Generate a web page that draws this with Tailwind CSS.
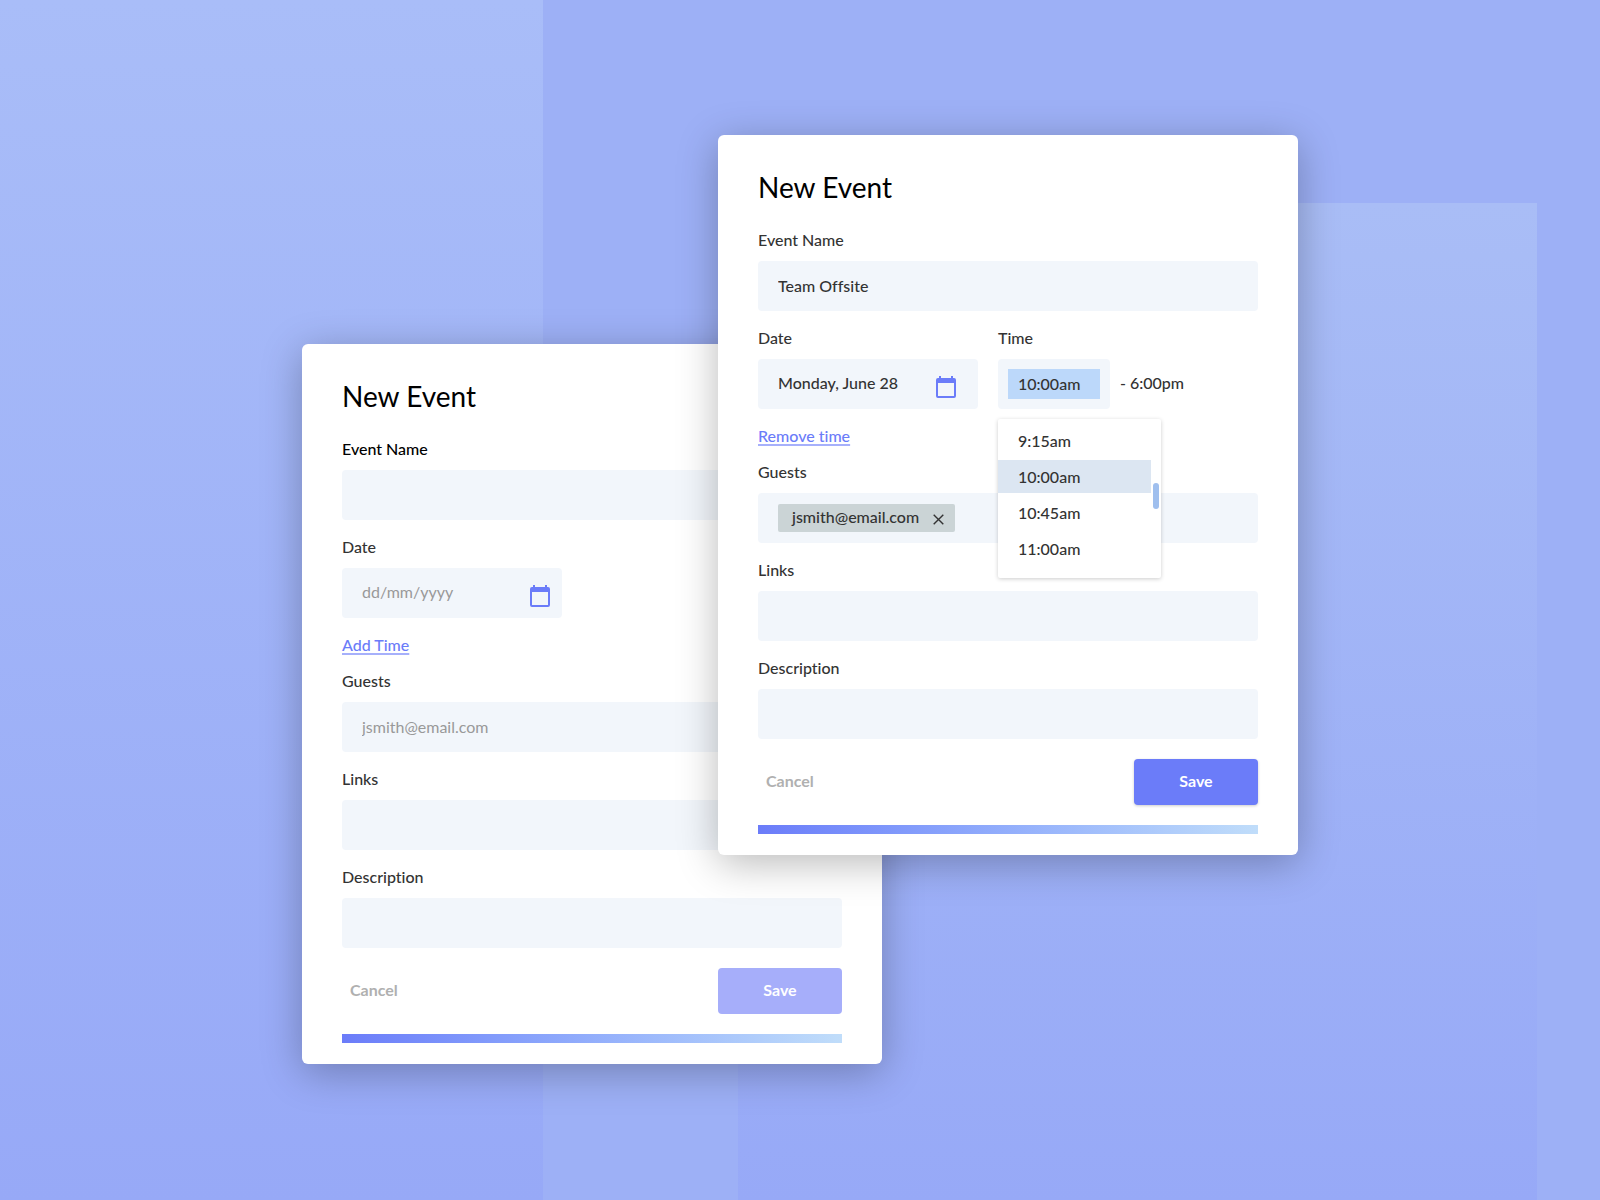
<!DOCTYPE html>
<html lang="en">
<head>
    <meta charset="UTF-8">
    <meta name="viewport" content="width=device-width, initial-scale=1.0">
    <title>New Event</title>
    <script src="https://cdn.jsdelivr.net/npm/@tailwindcss/browser@4"></script>
</head>
<body class="bg-[#9db0f6] font-['Lato',sans-serif] text-base leading-5 text-[#333333] [font-variant-ligatures:none]">
    <div class="relative isolate min-h-screen overflow-hidden">
        <!-- Background panels -->
        <div class="absolute inset-y-0 left-0 -z-10 w-[543px] bg-linear-to-b from-[#a9bdf8] to-[#97a9f7]"></div>
        <div class="absolute top-[203px] right-[63px] bottom-0 left-[738px] -z-10 bg-linear-to-b from-[#a9bdf6] to-[#97a9f7]"></div>

        <main class="flex items-start justify-center pt-[135px] pb-34">
            <!-- Empty form -->
            <form class="mt-[209px] w-[580px] shrink-0 rounded-md bg-white px-10 pt-[34px] pb-[21px] shadow-[0_8px_40px_rgba(0,0,0,0.28)]">
                <h1 class="mb-[25px] text-[28px] leading-9 text-black">New Event</h1>

                <label for="name1" class="mb-[11px] block font-medium text-black">Event Name</label>
                <input type="text" id="name1" class="mb-[17px] block h-[50px] w-full rounded bg-[#f2f6fb] px-5 pb-0.5">

                <label for="date1" class="mb-[11px] block font-medium">Date</label>
                <div class="mb-[17px] flex h-[50px] w-[220px] items-center justify-between rounded bg-[#f2f6fb] pr-3 pl-5">
                    <input type="text" id="date1" placeholder="dd/mm/yyyy" class="w-36 bg-transparent pb-0.5 placeholder:text-[#999999]">
                    <button type="button" aria-label="Pick a date" class="pt-1.5">
                        <svg class="block" width="20" height="22" viewBox="0 0 20 22" fill="#6b7cf9"><path fill-rule="evenodd" d="M3 0h2v2h10V0h2v2h1a2 2 0 0 1 2 2v16a2 2 0 0 1-2 2H2a2 2 0 0 1-2-2V4a2 2 0 0 1 2-2h1zM2 7v13h16V7z"/></svg>
                    </button>
                </div>

                <a href="#" class="mb-4 block w-fit font-medium text-[#6b7cf9] underline decoration-[#6b7cf9]/60 decoration-2 underline-offset-2">Add Time</a>

                <label for="guests1" class="mb-[11px] block font-medium">Guests</label>
                <input type="email" id="guests1" placeholder="jsmith@email.com" class="mb-[17px] block h-[50px] w-full rounded bg-[#f2f6fb] px-5 pb-0.5 placeholder:text-[#999999]">

                <label for="links1" class="mb-[11px] block font-medium">Links</label>
                <input type="text" id="links1" class="mb-[17px] block h-[50px] w-full rounded bg-[#f2f6fb] px-5 pb-0.5">

                <label for="description1" class="mb-[11px] block font-medium">Description</label>
                <input type="text" id="description1" class="mb-5 block h-[50px] w-full rounded bg-[#f2f6fb] px-5 pb-0.5">

                <div class="mb-5 flex items-center justify-between">
                    <button type="button" class="px-2 pb-0.5 font-bold text-[#b0b0b0]">Cancel</button>
                    <button type="submit" class="h-[46px] w-[124px] rounded bg-[#a6aefa] pb-0.5 font-bold text-white">Save</button>
                </div>
                <div class="h-[9px] bg-linear-to-r from-[#6b7cf9] to-[#c0ddfa]"></div>
            </form>

            <!-- Filled form, overlaps the empty one -->
            <form class="relative -ml-[164px] w-[580px] shrink-0 rounded-md bg-white px-10 pt-[34px] pb-[21px] shadow-[0_8px_40px_rgba(0,0,0,0.28)]">
                <h1 class="mb-[25px] text-[28px] leading-9 text-black">New Event</h1>

                <label for="name2" class="mb-[11px] block font-medium">Event Name</label>
                <input type="text" id="name2" value="Team Offsite" class="mb-[17px] block h-[50px] w-full rounded bg-[#f2f6fb] px-5 pb-0.5 font-medium">

                <div class="mb-[17px] flex gap-5">
                    <div>
                        <label for="date2" class="mb-[11px] block font-medium">Date</label>
                        <div class="flex h-[50px] w-[220px] items-center justify-between rounded bg-[#f2f6fb] pr-[22px] pl-5">
                            <input type="text" id="date2" value="Monday, June 28" class="w-36 bg-transparent pb-0.5 font-medium">
                            <button type="button" aria-label="Pick a date" class="pt-1.5">
                                <svg class="block" width="20" height="22" viewBox="0 0 20 22" fill="#6b7cf9"><path fill-rule="evenodd" d="M3 0h2v2h10V0h2v2h1a2 2 0 0 1 2 2v16a2 2 0 0 1-2 2H2a2 2 0 0 1-2-2V4a2 2 0 0 1 2-2h1zM2 7v13h16V7z"/></svg>
                            </button>
                        </div>
                    </div>
                    <div class="relative">
                        <label for="time2" class="mb-[11px] block font-medium">Time</label>
                        <div class="flex items-center gap-2.5">
                            <div class="rounded bg-[#f2f6fb] p-2.5">
                                <input type="text" id="time2" value="10:00am" class="block h-[30px] w-[92px] bg-[#bcd8fa] px-2.5 pb-0.5 font-medium">
                            </div>
                            <span class="pb-0.5 font-medium">- 6:00pm</span>
                        </div>
                        <!-- Time options -->
                        <div class="absolute top-full left-0 z-10 mt-2.5 flex h-[159px] w-[163px] rounded-xs bg-white pt-[5px] shadow-[0_1px_4px_rgba(0,0,0,0.2)]">
                            <ul role="listbox" aria-label="Time" class="flex w-[153px] flex-col gap-[3px] font-medium">
                                <li role="option" class="flex h-[33px] items-center px-5">9:15am</li>
                                <li role="option" aria-selected="true" class="flex h-[33px] items-center bg-[#dce6f2] px-5">10:00am</li>
                                <li role="option" class="flex h-[33px] items-center px-5">10:45am</li>
                                <li role="option" class="flex h-[33px] items-center px-5">11:00am</li>
                            </ul>
                            <div class="mt-[59px] ml-0.5 h-[26px] w-1.5 rounded-full bg-[#9fbfee]"></div>
                        </div>
                    </div>
                </div>

                <a href="#" class="mb-4 block w-fit font-medium text-[#6b7cf9] underline decoration-[#6b7cf9]/60 decoration-2 underline-offset-2">Remove time</a>

                <label for="guests2" class="mb-[11px] block font-medium">Guests</label>
                <div class="mb-[17px] flex h-[50px] items-center rounded bg-[#f2f6fb] px-5">
                    <span class="flex h-7 w-[177px] items-center justify-between rounded-xs bg-[#cbd4d6] pr-[11px] pl-3.5 font-medium">
                        <span class="pb-0.5">jsmith@email.com</span>
                        <button type="button" aria-label="Remove jsmith@email.com" class="pt-0.5">
                            <svg class="block" width="11" height="11" viewBox="0 0 11 11" fill="none" stroke="#333333" stroke-width="1.4"><path d="M.7.7l9.6 9.6M10.3.7L.7 10.3"/></svg>
                        </button>
                    </span>
                    <input type="email" id="guests2" aria-label="Add guest" class="min-w-0 flex-1 bg-transparent px-2">
                </div>

                <label for="links2" class="mb-[11px] block font-medium">Links</label>
                <input type="text" id="links2" class="mb-[17px] block h-[50px] w-full rounded bg-[#f2f6fb] px-5 pb-0.5">

                <label for="description2" class="mb-[11px] block font-medium">Description</label>
                <input type="text" id="description2" class="mb-5 block h-[50px] w-full rounded bg-[#f2f6fb] px-5 pb-0.5">

                <div class="mb-5 flex items-center justify-between">
                    <button type="button" class="px-2 pb-0.5 font-bold text-[#b0b0b0]">Cancel</button>
                    <button type="submit" class="h-[46px] w-[124px] rounded bg-[#6b7cf9] pb-0.5 font-bold text-white shadow-[0_1px_3px_rgba(0,0,0,0.2)]">Save</button>
                </div>
                <div class="h-[9px] bg-linear-to-r from-[#6b7cf9] to-[#c0ddfa]"></div>
            </form>
        </main>
    </div>
</body>
</html>
